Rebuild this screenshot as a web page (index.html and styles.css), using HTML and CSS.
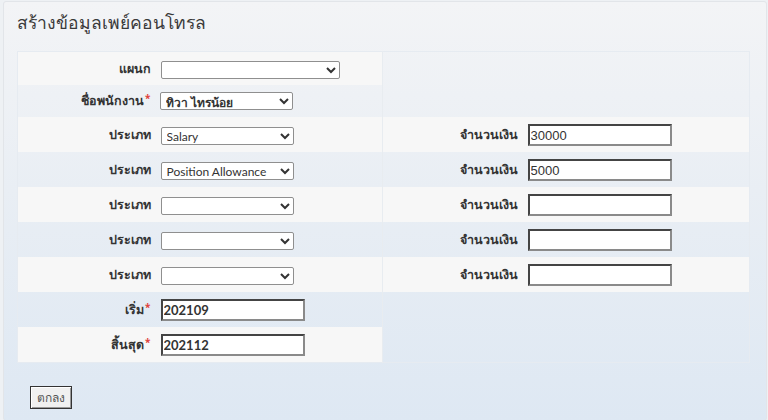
FILE: index.html
```html
<!DOCTYPE html>
<html lang="th">
<head>
<meta charset="utf-8">
<title>สร้างข้อมูลเพย์คอนโทรล</title>
<link rel="stylesheet" href="styles.css">
</head>
<body>
<div class="page">
  <h1 class="title">สร้างข้อมูลเพย์คอนโทรล</h1>
  <table class="form">
    <colgroup>
      <col class="c-label"><col class="c-field"><col class="c-label2"><col class="c-field2">
    </colgroup>
    <tr class="row light short">
      <td class="lbl">แผนก</td>
      <td><select class="sel sel-wide"><option></option></select></td>
    </tr>
    <tr class="row short2">
      <td class="lbl">ชื่อพนักงาน<span class="req">*</span></td>
      <td><select class="sel sel-name"><option>ทิวา ไทรน้อย</option></select></td>
    </tr>
    <tr class="row light">
      <td class="lbl">ประเภท</td>
      <td><select class="sel"><option>Salary</option></select></td>
      <td class="lbl">จำนวนเงิน</td>
      <td><input class="txt" type="text" value="30000"></td>
    </tr>
    <tr class="row">
      <td class="lbl">ประเภท</td>
      <td><select class="sel"><option>Position Allowance</option></select></td>
      <td class="lbl">จำนวนเงิน</td>
      <td><input class="txt" type="text" value="5000"></td>
    </tr>
    <tr class="row light">
      <td class="lbl">ประเภท</td>
      <td><select class="sel"><option></option></select></td>
      <td class="lbl">จำนวนเงิน</td>
      <td><input class="txt" type="text" value=""></td>
    </tr>
    <tr class="row">
      <td class="lbl">ประเภท</td>
      <td><select class="sel"><option></option></select></td>
      <td class="lbl">จำนวนเงิน</td>
      <td><input class="txt" type="text" value=""></td>
    </tr>
    <tr class="row light">
      <td class="lbl">ประเภท</td>
      <td><select class="sel"><option></option></select></td>
      <td class="lbl">จำนวนเงิน</td>
      <td><input class="txt" type="text" value=""></td>
    </tr>
    <tr class="row">
      <td class="lbl">เริ่ม<span class="req">*</span></td>
      <td><input class="txt txt-date" type="text" value="202109"></td>
    </tr>
    <tr class="row light">
      <td class="lbl">สิ้นสุด<span class="req">*</span></td>
      <td><input class="txt txt-date" type="text" value="202112"></td>
    </tr>
  </table>
  <div class="actions">
    <button class="btn" type="button">ตกลง</button>
  </div>
</div>
</body>
</html>
```
FILE: styles.css
```css
html, body {
  margin: 0;
  padding: 0;
  background: #eef1f4;
}
body {
  font-family: Tahoma, "Noto Sans", "Liberation Sans", sans-serif;
  color: #333;
}
.page {
  margin: 1px 1px 0 3px;
  height: 420px;
  box-sizing: border-box;
  border: 1px solid #e2e5e9;
  border-radius: 3px;
  background: linear-gradient(to bottom, #f3f4f6 0%, #e9eef4 45%, #dee8f3 100%);
  padding: 0 0 0 13px;
}
.title {
  margin: 0;
  padding: 7px 0 0 0;
  height: 42px;
  box-sizing: border-box;
  font-size: 17.5px;
  font-weight: normal;
  color: #3a3a3a;
  line-height: 26px;
}
.form {
  margin-top: 7px;
  border-collapse: collapse;
  table-layout: fixed;
  width: 732px;
  border: 1px solid #e6ebf1;
}
.c-label { width: 138px; }
.c-field { width: 227px; }
.c-label2 { width: 140px; }
.c-field2 { width: 227px; }
.row td {
  padding: 0;
  height: 35px;
  vertical-align: middle;
}
.row.short td { height: 33px; }
.row.short2 td { height: 32px; }
.row.light td { background: #f7f7f7; }
.row td:nth-child(2) { border-right: 1px solid #e8ecf0; }
.lbl {
  text-align: right;
  font-size: 12.5px;
  font-weight: bold;
  color: #333;
  white-space: nowrap;
}
.row td.lbl { padding-right: 5px; }
.req {
  color: #e0403a;
  font-size: 10px;
  vertical-align: top;
  margin-left: 1px;
}
.sel {
  width: 133px;
  height: 18px;
  margin-left: 5px;
  font-family: Lato, "Liberation Sans", sans-serif;
  font-size: 12px;
  color: #333;
  background: #fff;
  border: 1px solid #8f8f8f;
  border-radius: 2px;
  padding: 0 0 0 1px;
}
.sel-wide { width: 179px; }
.sel-name {
  margin-left: 4px;
  font-family: Tahoma, "Noto Sans", sans-serif;
  font-weight: bold;
  font-size: 12px;
}
.txt {
  width: 144px;
  height: 22px;
  box-sizing: border-box;
  margin-left: 5px;
  border: 2px solid;
  border-color: #444 #8a8a8a #8a8a8a #444;
  background: #fff;
  padding: 0 1px;
  font-family: "Liberation Sans", Arial, sans-serif;
  font-size: 13px;
  color: #333;
}
.txt-date {
  font-family: Lato, "Liberation Sans", sans-serif;
  font-weight: bold;
  font-size: 13px;
  color: #333;
}
.actions {
  padding: 22px 0 0 13px;
}
.btn {
  height: 23px;
  width: 42px;
  padding: 0;
  background: #f0f0f0;
  border: 1px solid #333;
  box-shadow: inset 1px 1px #fff, inset -1px -1px #999;
  font-family: Tahoma, "Noto Sans", sans-serif;
  font-size: 12px;
  color: #555;
}
```
